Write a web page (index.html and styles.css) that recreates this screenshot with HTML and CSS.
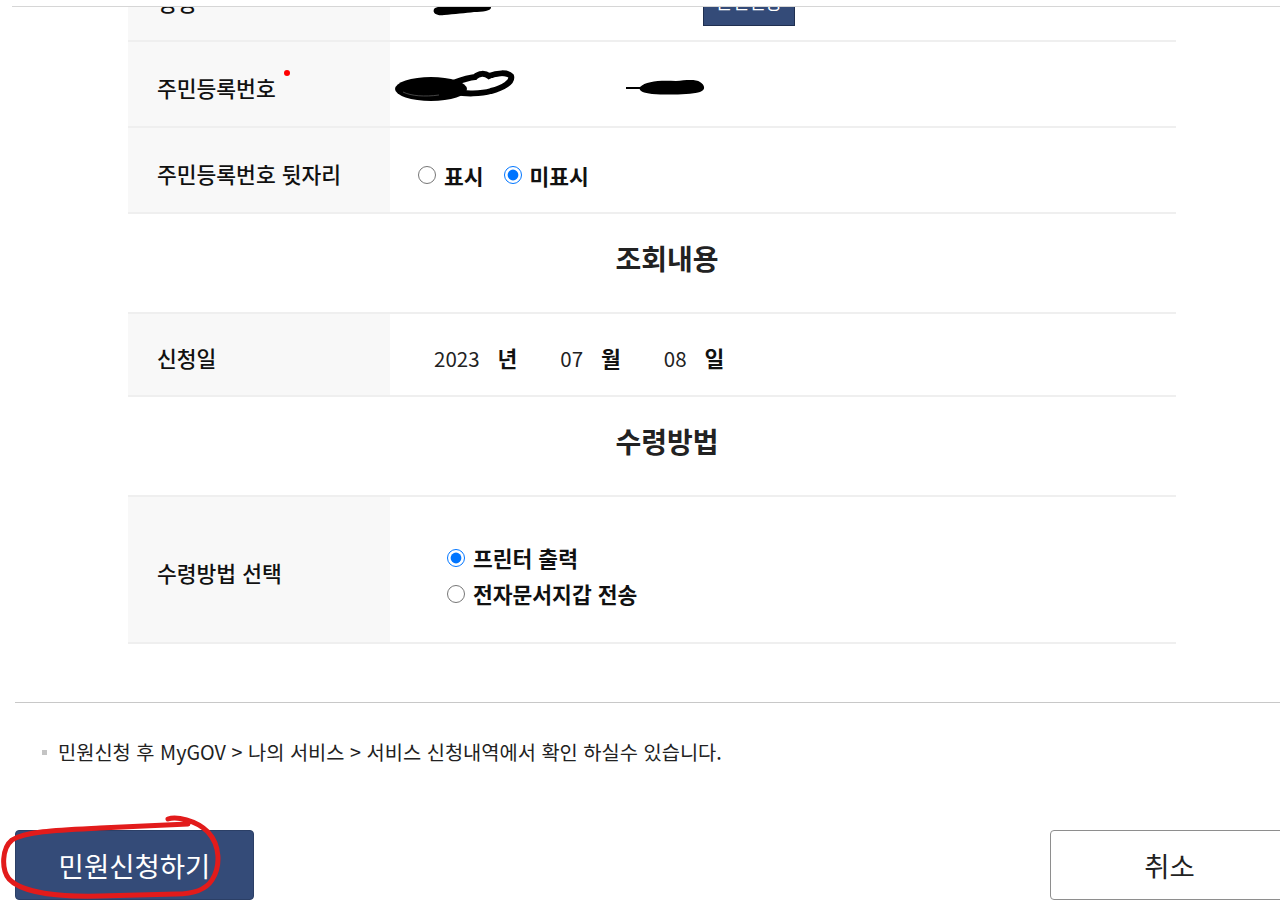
FILE: index.html
```html
<!DOCTYPE html>
<html lang="ko">
<head>
<meta charset="utf-8">
<title>민원신청</title>
<link rel="stylesheet" href="styles.css">
</head>
<body>
<div class="topbar"></div>
<div class="page">
  <div class="form">
    <div class="row r-std">
      <div class="label">성명</div>
      <div class="value v-name">
        <svg class="scrib" width="64" height="16" viewBox="0 0 64 16"><path d="M4 8 C 8 4, 18 6, 24 5 C 28 1, 34 1, 38 4 C 46 3, 56 3, 61 6 C 62 10, 52 11, 44 11 C 36 12, 24 13, 14 14 C 8 15, 2 13, 4 8 Z" fill="#000"/></svg>
        <button class="auth-btn" type="button">본인인증</button>
      </div>
    </div>
    <div class="row r-std">
      <div class="label">주민등록번호<span class="req"></span></div>
      <div class="value v-rrn">
        <svg class="scrib1" width="120" height="32" viewBox="0 0 120 32"><ellipse cx="36" cy="19" rx="36" ry="12" fill="#000"/><path d="M50 16 C 62 12, 70 8, 80 7 C 84 3, 90 3, 94 6 C 102 3, 112 2, 116 6 C 118 12, 108 18, 96 21 C 86 24, 70 24, 60 22" fill="none" stroke="#000" stroke-width="6" stroke-linecap="round"/><path d="M96 9 C 104 7, 110 7, 112 8" stroke="#fff" stroke-width="1.2" fill="none"/><path d="M8 22 C 16 26, 30 27, 44 25" stroke="#555" stroke-width="0.8" fill="none"/></svg>
        <svg class="scrib2" width="80" height="18" viewBox="0 0 80 18"><path d="M0 10 L 16 10" stroke="#000" stroke-width="2"/><path d="M14 9 C 20 3, 34 2, 50 3 C 60 2, 70 1, 74 4 C 79 7, 80 12, 74 14 C 62 17, 40 17, 26 16 C 18 15, 12 13, 14 9 Z" fill="#000"/></svg>
      </div>
    </div>
    <div class="row r-std">
      <div class="label">주민등록번호 뒷자리</div>
      <div class="value v-radios">
        <label class="opt"><input type="radio" name="show"><span>표시</span></label>
        <label class="opt"><input type="radio" name="show" checked><span>미표시</span></label>
      </div>
    </div>

    <h2 class="sec-title">조회내용</h2>

    <div class="row r-date first">
      <div class="label">신청일</div>
      <div class="value v-date">
        <span class="num">2023</span><span class="unit">년</span>
        <span class="num">07</span><span class="unit">월</span>
        <span class="num">08</span><span class="unit">일</span>
      </div>
    </div>

    <h2 class="sec-title">수령방법</h2>

    <div class="row r-recv first">
      <div class="label">수령방법 선택</div>
      <div class="value v-stack">
        <label class="opt"><input type="radio" name="recv" checked><span>프린터 출력</span></label>
        <label class="opt"><input type="radio" name="recv"><span>전자문서지갑 전송</span></label>
      </div>
    </div>
  </div>

  <div class="divider"></div>

  <p class="note"><span class="bullet"></span>민원신청 후 MyGOV &gt; 나의 서비스 &gt; 서비스 신청내역에서 확인 하실수 있습니다.</p>

  <div class="actions">
    <button class="btn-primary" type="button">민원신청하기</button>
    <button class="btn-cancel" type="button">취소</button>
    <svg class="mark" width="240" height="110" viewBox="0 800 240 110"><path d="M168 819 C 176 816, 196 820, 208 832 C 220 845, 221 866, 212 880 C 205 891, 192 894, 176 894 L 100 896 C 60 897, 22 893, 9 879 C 1 869, 2 848, 12 840 C 26 831, 60 830, 100 828 L 188 824" fill="none" stroke="#e21b1b" stroke-width="5" stroke-linecap="round" stroke-linejoin="round"/></svg>
  </div>
</div>
</body>
</html>
```
FILE: styles.css
```css
html, body {
  margin: 0;
  padding: 0;
  overflow: hidden;
  background: #fff;
}
body {
  font-family: "Noto Sans CJK KR", "Noto Sans", sans-serif;
  color: #111;
}
.topbar {
  position: fixed;
  top: 0;
  left: 12px;
  right: 0;
  height: 6px;
  background: #fff;
  border-bottom: 1px solid #d6d6d6;
  z-index: 5;
}
.topbar::before {
  content: "";
  position: fixed;
  top: 0;
  left: 0;
  width: 12px;
  height: 7px;
  background: #fff;
}
.page {
  width: 1274px;
  margin: -44px 0 0 15px;
}
.form {
  width: 1048px;
  margin: 0 auto;
}
.row {
  display: grid;
  grid-template-columns: 262px 1fr;
  border-bottom: 2px solid #efefef;
}
.row.first {
  border-top: 2px solid #efefef;
}
.r-std { height: 84px; }
.r-date { height: 81px; }
.r-recv { height: 145px; }
.label {
  background: #f8f8f8;
  display: flex;
  align-items: center;
  padding-left: 29px;
  font-size: 21.5px;
  font-weight: 500;
  color: #111;
  padding-top: 6px;
  box-sizing: border-box;
}
.req {
  display: inline-block;
  width: 6px;
  height: 6px;
  border-radius: 50%;
  background: #f00;
  margin-left: 8px;
  align-self: flex-start;
  margin-top: 22px;
}
.value {
  display: flex;
  align-items: center;
}
.v-name { padding-left: 40px; }
.v-name .scrib { margin-top: 22px; }
.auth-btn {
  margin-left: 209px;
  width: 92px;
  height: 50px;
  background: #344b78;
  color: #fff;
  border: 1px solid #1f2f50;
  font-family: inherit;
  font-size: 18px;
  margin-top: 6px;
}
.v-rrn { padding-left: 5px; }
.v-rrn .scrib1 { margin-top: 3px; }
.v-rrn .scrib2 { margin-left: 111px; margin-top: 5px; }
.v-radios {
  padding-left: 28px;
  gap: 20px;
  padding-top: 10px;
}
.opt {
  display: flex;
  align-items: center;
  gap: 8px;
  font-size: 21.5px;
  font-weight: 700;
  color: #111;
}
.opt input {
  width: 18px;
  height: 18px;
  margin: 0;
}
.sec-title {
  margin: 0;
  height: 98px;
  box-sizing: border-box;
  padding: 24px 0 0 30px;
  text-align: center;
  font-size: 28px;
  line-height: 40px;
  font-weight: 700;
  color: #222;
}
.v-date {
  padding-left: 44px;
  padding-top: 6px;
}
.v-date .num {
  color: #222;
  font-size: 20.5px;
}
.v-date .unit {
  font-weight: 700;
  font-size: 21.5px;
  margin-left: 18px;
  margin-right: 43px;
}
.v-stack {
  flex-direction: column;
  align-items: flex-start;
  justify-content: center;
  padding-left: 57px;
  gap: 10px;
  padding-top: 12px;
}
.v-stack .opt { line-height: 26px; }
.divider {
  margin-top: 58px;
  border-top: 1px solid #c8c8c8;
}
.note {
  margin: 36px 0 0;
  padding-left: 27px;
  display: flex;
  align-items: center;
  font-size: 19.8px;
  line-height: 26px;
  color: #222;
}
.bullet {
  width: 5px;
  height: 5px;
  background: #c4c4c4;
  margin-right: 11px;
}
.actions {
  position: relative;
  margin-top: 65px;
  display: flex;
  justify-content: space-between;
}
.btn-primary, .btn-cancel {
  width: 239px;
  height: 70px;
  font-family: inherit;
  font-size: 27.5px;
  border-radius: 4px;
}
.btn-primary {
  background: #344b78;
  color: #fff;
  border: 1px solid #2b3f66;
}
.btn-cancel {
  background: #fff;
  color: #222;
  border: 1px solid #8e8e8e;
}
.mark {
  position: absolute;
  left: -15px;
  top: -30px;
  pointer-events: none;
}
```
